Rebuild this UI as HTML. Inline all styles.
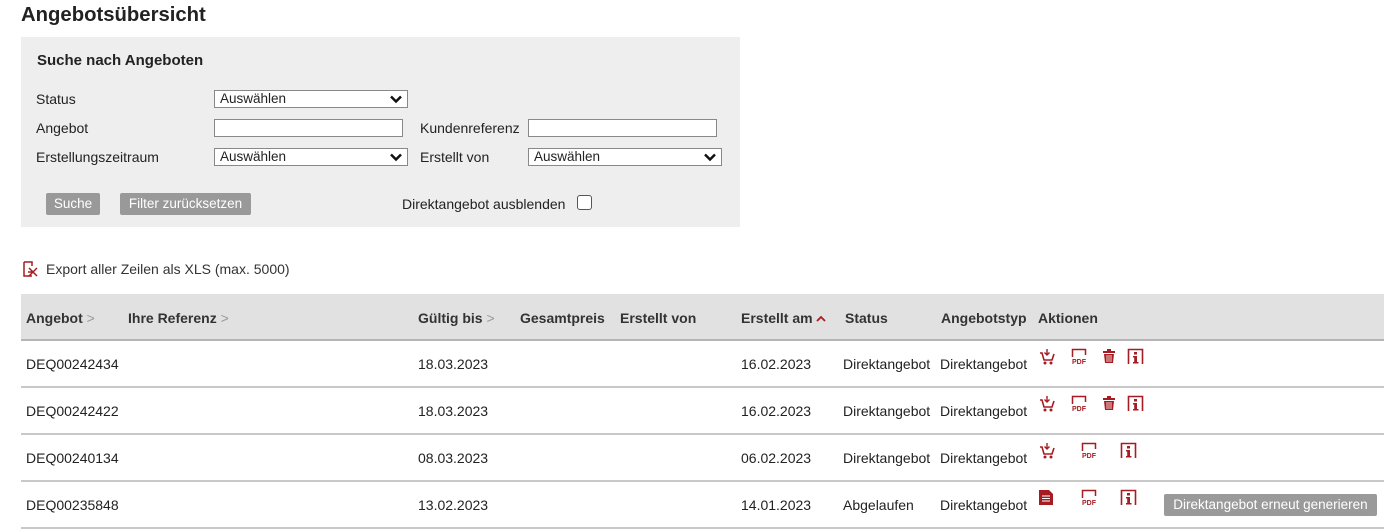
<!DOCTYPE html>
<html><head><meta charset="utf-8"><style>
*{margin:0;padding:0;box-sizing:border-box}
body{width:1389px;height:531px;background:#fff;font-family:"Liberation Sans",Arial,sans-serif;font-size:14px;color:#222;position:relative;overflow:hidden}
.a{position:absolute;white-space:nowrap}
.inp{position:absolute;background:#fff;border:1px solid #888;height:18px;font-size:13.5px;padding-left:5px;line-height:16px}
.sel svg{position:absolute;right:5px;top:4px}
.btn{position:absolute;background:#999;color:#fff;border-radius:2px;font-size:13.5px;text-align:center;line-height:22px;height:22px}
.hd{font-weight:bold;color:#333}
.gt{color:#999;font-weight:normal}
.sep{position:absolute;left:21px;width:1363px;height:2px;background:#c8c8c8}
svg.ic{position:absolute}
</style></head><body>
<div class="a" style="left:21px;top:4px;font-size:20.3px;font-weight:bold;color:#222">Angebotsübersicht</div>
<div class="a" style="left:21px;top:37px;width:719px;height:190px;background:#eeeeee"></div>
<div class="a" style="left:37px;top:52px;font-size:15px;font-weight:bold">Suche nach Angeboten</div>
<div class="a" style="left:36px;top:91px">Status</div>
<div class="a" style="left:36px;top:120px">Angebot</div>
<div class="a" style="left:36px;top:149px">Erstellungszeitraum</div>
<div class="inp sel" style="left:214px;top:90px;width:194px">Auswählen<svg width="12" height="9" viewBox="0 0 12 9"><path d="M1 1.5L6 6.5L11 1.5" stroke="#111" stroke-width="2.5" fill="none"/></svg></div>
<div class="inp" style="left:214px;top:119px;width:189px"></div>
<div class="inp sel" style="left:214px;top:148px;width:194px">Auswählen<svg width="12" height="9" viewBox="0 0 12 9"><path d="M1 1.5L6 6.5L11 1.5" stroke="#111" stroke-width="2.5" fill="none"/></svg></div>
<div class="a" style="left:420px;top:120px">Kundenreferenz</div>
<div class="a" style="left:420px;top:149px">Erstellt von</div>
<div class="inp" style="left:528px;top:119px;width:189px"></div>
<div class="inp sel" style="left:528px;top:148px;width:194px">Auswählen<svg width="12" height="9" viewBox="0 0 12 9"><path d="M1 1.5L6 6.5L11 1.5" stroke="#111" stroke-width="2.5" fill="none"/></svg></div>
<div class="btn" style="left:46px;top:193px;width:54px">Suche</div>
<div class="btn" style="left:120px;top:193px;width:131px">Filter zurücksetzen</div>
<div class="a" style="left:402px;top:196px">Direktangebot ausblenden</div>
<div class="a" style="left:577px;top:195px;width:15px;height:15px;border:1px solid #555;border-radius:3px;background:#fff"></div>

<svg class="ic" style="left:23px;top:261px" width="16" height="16" viewBox="0 0 16 16"><path d="M1 1h8v4M1 1v14h8" stroke="#a61c22" stroke-width="1.5" fill="none"/><path d="M6 7l8 8M14 7l-8 8M5 11h4" stroke="#a61c22" stroke-width="1.5"/></svg>
<div class="a" style="left:46px;top:261px;color:#333">Export aller Zeilen als XLS (max. 5000)</div>

<div class="a" style="left:21px;top:294px;width:1363px;height:46px;background:#e1e1e1"></div>
<div class="sep" style="top:339px;background:#b5b5b5"></div>
<div class="a hd" style="left:26px;top:310px">Angebot <span class="gt">&gt;</span></div>
<div class="a hd" style="left:128px;top:310px">Ihre Referenz <span class="gt">&gt;</span></div>
<div class="a hd" style="left:418px;top:310px">Gültig bis <span class="gt">&gt;</span></div>
<div class="a hd" style="left:520px;top:310px">Gesamtpreis</div>
<div class="a hd" style="left:620px;top:310px">Erstellt von</div>
<div class="a hd" style="left:741px;top:310px">Erstellt am <svg width="10" height="8" viewBox="0 0 10 8"><path d="M1 6L5 2L9 6" stroke="#a61c22" stroke-width="1.8" fill="none"/></svg></div>
<div class="a hd" style="left:845px;top:310px">Status</div>
<div class="a hd" style="left:941px;top:310px">Angebotstyp</div>
<div class="a hd" style="left:1038px;top:310px">Aktionen</div>

<div class="a" style="left:26px;top:356px">DEQ00242434</div><div class="a" style="left:418px;top:356px">18.03.2023</div><div class="a" style="left:741px;top:356px">16.02.2023</div><div class="a" style="left:843px;top:356px">Direktangebot</div><div class="a" style="left:940px;top:356px">Direktangebot</div>
<div class="sep" style="top:386px"></div>
<div class="a" style="left:26px;top:403px">DEQ00242422</div><div class="a" style="left:418px;top:403px">18.03.2023</div><div class="a" style="left:741px;top:403px">16.02.2023</div><div class="a" style="left:843px;top:403px">Direktangebot</div><div class="a" style="left:940px;top:403px">Direktangebot</div>
<div class="sep" style="top:433px"></div>
<div class="a" style="left:26px;top:450px">DEQ00240134</div><div class="a" style="left:418px;top:450px">08.03.2023</div><div class="a" style="left:741px;top:450px">06.02.2023</div><div class="a" style="left:843px;top:450px">Direktangebot</div><div class="a" style="left:940px;top:450px">Direktangebot</div>
<div class="sep" style="top:480px"></div>
<div class="a" style="left:26px;top:497px">DEQ00235848</div><div class="a" style="left:418px;top:497px">13.02.2023</div><div class="a" style="left:741px;top:497px">14.01.2023</div><div class="a" style="left:843px;top:497px">Abgelaufen</div><div class="a" style="left:940px;top:497px">Direktangebot</div>
<div class="sep" style="top:527px"></div>
<div class="btn" style="left:1164px;top:494px;width:213px;height:22px;line-height:22px;background:#9a9a9a">Direktangebot erneut generieren</div>

<svg class="ic" style="left:1039px;top:348px" width="17" height="18" viewBox="0 0 17 18"><path d="M1 5h2l2 7h8l2-6" stroke="#a61c22" stroke-width="1.6" fill="none"/><path d="M8 1v6M5.5 4.5L8 7l2.5-2.5" stroke="#a61c22" stroke-width="1.4" fill="none"/><circle cx="6" cy="15" r="1.5" fill="#a61c22"/><circle cx="12" cy="15" r="1.5" fill="#a61c22"/></svg>
<svg class="ic" style="left:1071px;top:348px" width="17" height="17" viewBox="0 0 17 17"><path d="M1.5 9V1.5h13V7" stroke="#a61c22" stroke-width="1.5" fill="none"/><text x="1" y="16" font-size="7" font-weight="bold" fill="#a61c22" font-family="Liberation Sans">PDF</text></svg>
<svg class="ic" style="left:1102px;top:349px" width="14" height="15" viewBox="0 0 14 15"><rect x="1" y="2" width="12" height="2" fill="#a61c22"/><rect x="5" y="0" width="4" height="2" fill="#a61c22"/><path d="M2 5h10l-1 9H3z" fill="#a61c22"/><path d="M5 6v7M7 6v7M9 6v7" stroke="#fff" stroke-width="0.8"/></svg>
<svg class="ic" style="left:1127px;top:348px" width="17" height="17" viewBox="0 0 17 17"><path d="M1.5 16V1.5h14V16" stroke="#a61c22" stroke-width="1.6" fill="none"/><rect x="7" y="4" width="3" height="2.5" fill="#a61c22"/><path d="M6 8h4v6h1.5v1.5h-5.5V14h1.2V9.5H6z" fill="#a61c22"/></svg>
<svg class="ic" style="left:1039px;top:395px" width="17" height="18" viewBox="0 0 17 18"><path d="M1 5h2l2 7h8l2-6" stroke="#a61c22" stroke-width="1.6" fill="none"/><path d="M8 1v6M5.5 4.5L8 7l2.5-2.5" stroke="#a61c22" stroke-width="1.4" fill="none"/><circle cx="6" cy="15" r="1.5" fill="#a61c22"/><circle cx="12" cy="15" r="1.5" fill="#a61c22"/></svg>
<svg class="ic" style="left:1071px;top:395px" width="17" height="17" viewBox="0 0 17 17"><path d="M1.5 9V1.5h13V7" stroke="#a61c22" stroke-width="1.5" fill="none"/><text x="1" y="16" font-size="7" font-weight="bold" fill="#a61c22" font-family="Liberation Sans">PDF</text></svg>
<svg class="ic" style="left:1102px;top:396px" width="14" height="15" viewBox="0 0 14 15"><rect x="1" y="2" width="12" height="2" fill="#a61c22"/><rect x="5" y="0" width="4" height="2" fill="#a61c22"/><path d="M2 5h10l-1 9H3z" fill="#a61c22"/><path d="M5 6v7M7 6v7M9 6v7" stroke="#fff" stroke-width="0.8"/></svg>
<svg class="ic" style="left:1127px;top:395px" width="17" height="17" viewBox="0 0 17 17"><path d="M1.5 16V1.5h14V16" stroke="#a61c22" stroke-width="1.6" fill="none"/><rect x="7" y="4" width="3" height="2.5" fill="#a61c22"/><path d="M6 8h4v6h1.5v1.5h-5.5V14h1.2V9.5H6z" fill="#a61c22"/></svg>
<svg class="ic" style="left:1039px;top:442px" width="17" height="18" viewBox="0 0 17 18"><path d="M1 5h2l2 7h8l2-6" stroke="#a61c22" stroke-width="1.6" fill="none"/><path d="M8 1v6M5.5 4.5L8 7l2.5-2.5" stroke="#a61c22" stroke-width="1.4" fill="none"/><circle cx="6" cy="15" r="1.5" fill="#a61c22"/><circle cx="12" cy="15" r="1.5" fill="#a61c22"/></svg>
<svg class="ic" style="left:1081px;top:442px" width="17" height="17" viewBox="0 0 17 17"><path d="M1.5 9V1.5h13V7" stroke="#a61c22" stroke-width="1.5" fill="none"/><text x="1" y="16" font-size="7" font-weight="bold" fill="#a61c22" font-family="Liberation Sans">PDF</text></svg>
<svg class="ic" style="left:1120px;top:442px" width="17" height="17" viewBox="0 0 17 17"><path d="M1.5 16V1.5h14V16" stroke="#a61c22" stroke-width="1.6" fill="none"/><rect x="7" y="4" width="3" height="2.5" fill="#a61c22"/><path d="M6 8h4v6h1.5v1.5h-5.5V14h1.2V9.5H6z" fill="#a61c22"/></svg>
<svg class="ic" style="left:1038px;top:489px" width="16" height="17" viewBox="0 0 16 17"><path d="M1 1h10l4 4v11H1z" fill="#a61c22"/><path d="M4 7h8M4 9.5h8M4 12h8" stroke="#fff" stroke-width="1"/></svg>
<svg class="ic" style="left:1081px;top:489px" width="17" height="17" viewBox="0 0 17 17"><path d="M1.5 9V1.5h13V7" stroke="#a61c22" stroke-width="1.5" fill="none"/><text x="1" y="16" font-size="7" font-weight="bold" fill="#a61c22" font-family="Liberation Sans">PDF</text></svg>
<svg class="ic" style="left:1120px;top:489px" width="17" height="17" viewBox="0 0 17 17"><path d="M1.5 16V1.5h14V16" stroke="#a61c22" stroke-width="1.6" fill="none"/><rect x="7" y="4" width="3" height="2.5" fill="#a61c22"/><path d="M6 8h4v6h1.5v1.5h-5.5V14h1.2V9.5H6z" fill="#a61c22"/></svg>
</body></html>
